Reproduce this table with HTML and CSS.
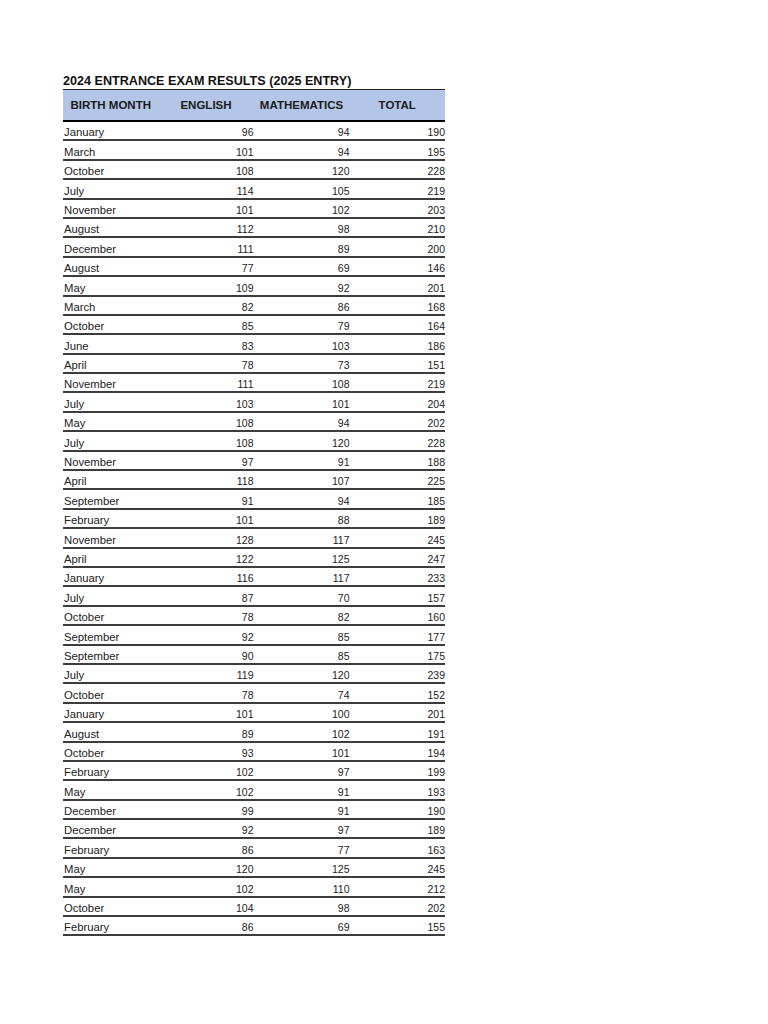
FILE: index.html
```html
<!DOCTYPE html>
<html>
<head>
<meta charset="utf-8">
<link rel="stylesheet" href="styles.css">
</head>
<body>
<div class="sheet">
  <div class="title">2024 ENTRANCE EXAM RESULTS (2025 ENTRY)</div>
  <div class="table">
    <div class="head">
      <div>BIRTH MONTH</div><div>ENGLISH</div><div>MATHEMATICS</div><div>TOTAL</div>
    </div>
    <div class="body" id="rows"></div>
  </div>
</div>
<script src="script.js"></script>
</body>
</html>
```
FILE: script.js
```js
const data = [
["January",96,94,190],["March",101,94,195],["October",108,120,228],["July",114,105,219],
["November",101,102,203],["August",112,98,210],["December",111,89,200],["August",77,69,146],
["May",109,92,201],["March",82,86,168],["October",85,79,164],["June",83,103,186],
["April",78,73,151],["November",111,108,219],["July",103,101,204],["May",108,94,202],
["July",108,120,228],["November",97,91,188],["April",118,107,225],["September",91,94,185],
["February",101,88,189],["November",128,117,245],["April",122,125,247],["January",116,117,233],
["July",87,70,157],["October",78,82,160],["September",92,85,177],["September",90,85,175],
["July",119,120,239],["October",78,74,152],["January",101,100,201],["August",89,102,191],
["October",93,101,194],["February",102,97,199],["May",102,91,193],["December",99,91,190],
["December",92,97,189],["February",86,77,163],["May",120,125,245],["May",102,110,212],
["October",104,98,202],["February",86,69,155]];
const rows = document.getElementById('rows');
for (const r of data) {
  const row = document.createElement('div');
  row.className = 'row';
  row.innerHTML = `<div class="m">${r[0]}</div><div class="n">${r[1]}</div><div class="n">${r[2]}</div><div class="n">${r[3]}</div>`;
  rows.appendChild(row);
}
```
FILE: styles.css
```css
html, body { margin: 0; padding: 0; background: #fff; }
body { font-family: "Liberation Sans", Arial, sans-serif; color: #222; }
.sheet { padding: 73px 0 0 63px; width: 382px; }
.title { font-weight: bold; font-size: 12.6px; line-height: 16px; height: 16px; color: #111; }
.table { width: 382px; }
.head {
  display: grid; grid-template-columns: 95.5px 95px 96px 95.5px;
  background: #b4c6e7; border-top: 1px solid #222; border-bottom: 2px solid #000;
  height: 30px; align-items: center; font-weight: bold; font-size: 11.5px; color: #1a1a1a;
}
.head div { text-align: center; }
.row {
  box-sizing: border-box;
  display: grid; grid-template-columns: 95.5px 95px 96px 95.5px;
  height: 19.4px; border-bottom: 2px solid #3c3c3c; align-items: end;
}
.m { font-size: 11.3px; line-height: 14px; padding-left: 1px; padding-bottom: 0; }
.n { font-size: 10.5px; line-height: 13px; text-align: right; padding-bottom: 0; }
```
